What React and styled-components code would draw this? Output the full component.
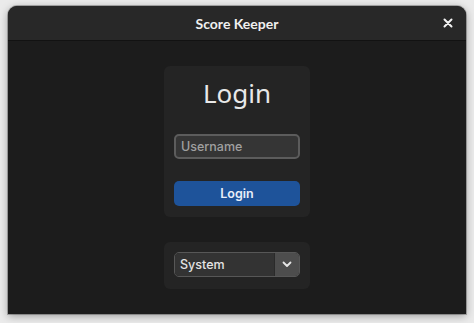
import styled, { createGlobalStyle } from "styled-components";

const GlobalStyle = createGlobalStyle`
  html, body {
    margin: 0;
    padding: 0;
    background: #ebebeb;
  }
  body {
    font-family: "Noto Sans", "DejaVu Sans", sans-serif;
  }
`;

const App = () => {
  return (
    <>
      <GlobalStyle />
      <Page>
        <Window>
          <TitleBar>
            <Title>Score Keeper</Title>
            <CloseButton aria-label="Close">
              <svg width="10" height="10" viewBox="0 0 10 10">
                <path d="M1.5 1.5 L8.5 8.5 M8.5 1.5 L1.5 8.5" stroke="#f2f2f2" strokeWidth="2" strokeLinecap="round" />
              </svg>
            </CloseButton>
          </TitleBar>
          <Content>
            <Card>
              <Heading>Login</Heading>
              <TextInput placeholder="Username" />
              <PrimaryButton>Login</PrimaryButton>
            </Card>
            <Card $compact>
              <Select>
                <SelectValue>System</SelectValue>
                <SelectArrow>
                  <svg width="10" height="7" viewBox="0 0 10 7">
                    <path d="M1.5 1.5 L5 5 L8.5 1.5" fill="none" stroke="#e6e6e6" strokeWidth="1.8" strokeLinecap="round" strokeLinejoin="round" />
                  </svg>
                </SelectArrow>
              </Select>
            </Card>
          </Content>
        </Window>
      </Page>
    </>
  );
};

export default App;

const Page = styled.div`
  width: 474px;
  height: 323px;
  padding: 6px 8px 0 8px;
  box-sizing: border-box;
`;

const Window = styled.div`
  width: 458px;
  height: 308px;
  background: #1c1c1c;
  border-radius: 9px 9px 0 0;
  box-shadow: 0 2px 8px rgba(0, 0, 0, 0.35), 0 0 0 1px rgba(0, 0, 0, 0.25);
  overflow: hidden;
  display: flex;
  flex-direction: column;
`;

const TitleBar = styled.div`
  height: 34px;
  flex-shrink: 0;
  background: #282828;
  border-bottom: 1px solid #121212;
  position: relative;
  display: flex;
  align-items: center;
  justify-content: center;
`;

const Title = styled.div`
  font-family: Lato, "Noto Sans", sans-serif;
  font-weight: 700;
  font-size: 14px;
  color: #f0f0f0;
  margin-top: 1px;
`;

const CloseButton = styled.div`
  position: absolute;
  right: 13px;
  top: 12px;
  width: 10px;
  height: 10px;
  display: flex;
`;

const Content = styled.div`
  flex: 1;
  display: flex;
  flex-direction: column;
  align-items: center;
  padding-top: 25px;
  gap: 25px;
`;

const Card = styled.div`
  width: 146px;
  box-sizing: border-box;
  background: #242424;
  border-radius: 6px;
  padding: ${(p) => (p.$compact ? "10px 10px 12px" : "11px 10px 11px")};
  display: flex;
  flex-direction: column;
`;

const Heading = styled.div`
  font-family: "Noto Sans", sans-serif;
  font-size: 26px;
  line-height: 32px;
  color: #e8e8e8;
  text-align: center;
  margin-bottom: 25px;
`;

const TextInput = styled.input`
  height: 25px;
  box-sizing: border-box;
  background: #353535;
  border: 2px solid #5c5c5c;
  border-radius: 5px;
  padding: 0 5px;
  font-family: Inter, "Noto Sans", sans-serif;
  font-weight: 500;
  font-size: 12.5px;
  color: #e0e0e0;
  outline: none;
  &::placeholder {
    color: #a0a0a0;
  }
`;

const PrimaryButton = styled.div`
  margin-top: 22px;
  height: 25px;
  border-radius: 5px;
  background: #1e539a;
  color: #e8eef8;
  font-family: Inter, "Noto Sans", sans-serif;
  font-weight: 600;
  font-size: 12.5px;
  display: flex;
  align-items: center;
  justify-content: center;
`;

const Select = styled.div`
  height: 25px;
  box-sizing: border-box;
  border: 1px solid #575757;
  border-radius: 5px;
  overflow: hidden;
  display: flex;
`;

const SelectValue = styled.div`
  flex: 1;
  background: #333333;
  color: #e4e4e4;
  font-family: Inter, "Noto Sans", sans-serif;
  font-weight: 500;
  font-size: 12.5px;
  display: flex;
  align-items: center;
  padding-left: 5px;
`;

const SelectArrow = styled.div`
  width: 24px;
  background: #4d4d4d;
  border-left: 1px solid #2a2a2a;
  display: flex;
  align-items: center;
  justify-content: center;
`;
